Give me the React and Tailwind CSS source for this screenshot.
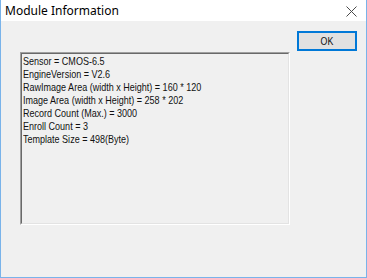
import React from "react";

export default function App() {
  const lines = [
    "Sensor = CMOS-6.5",
    "EngineVersion = V2.6",
    "RawImage Area (width x Height) = 160 * 120",
    "Image Area (width x Height) = 258 * 202",
    "Record Count (Max.) = 3000",
    "Enroll Count = 3",
    "Template Size = 498(Byte)",
  ];
  const sans = { fontFamily: '"Liberation Sans", Arial, sans-serif' };
  return (
    <div className="w-[367px] h-[278px] flex flex-col bg-[#f0f0f0] border-x border-b border-[#79b3ea] overflow-hidden">
      <div className="h-[21px] bg-white flex items-center justify-between shrink-0 -mx-px pl-[5px] pr-[8px]">
        <span className="text-[12px] text-black leading-none pt-[1px]" style={{ fontFamily: '"Noto Sans", "Open Sans", sans-serif' }}>
          Module Information
        </span>
        <svg width="11" height="11" viewBox="0 0 11 11" className="mr-[2px] mt-[1px]">
          <path d="M0.5 0.5 L10.5 10.5 M10.5 0.5 L0.5 10.5" stroke="#4a4a4a" strokeWidth="1" fill="none" />
        </svg>
      </div>
      <div className="flex items-start pl-[19px]">
        <div className="mt-[31px] w-[270px] h-[173px] border-t border-l border-t-[#a0a0a0] border-l-[#a0a0a0] border-b border-r border-b-white border-r-white">
          <div className="w-full h-full border-t border-l border-t-[#696969] border-l-[#696969] border-b border-r border-b-[#e3e3e3] border-r-[#e3e3e3] pl-[1px] pt-[1px]">
            <div className="origin-left scale-x-[0.82]">
              {lines.map((l) => (
                <div key={l} className="text-[11px] leading-[13px] text-[#111] whitespace-nowrap" style={sans}>
                  {l}
                </div>
              ))}
            </div>
          </div>
        </div>
        <button className="ml-[7px] mt-[10px] w-[60px] h-[20px] bg-[#e1e1e1] border-2 border-[#0078d7] flex items-center justify-center text-[11px] text-[#111] leading-none" style={sans}>
          <span className="scale-x-[0.8]">OK</span>
        </button>
      </div>
    </div>
  );
}
